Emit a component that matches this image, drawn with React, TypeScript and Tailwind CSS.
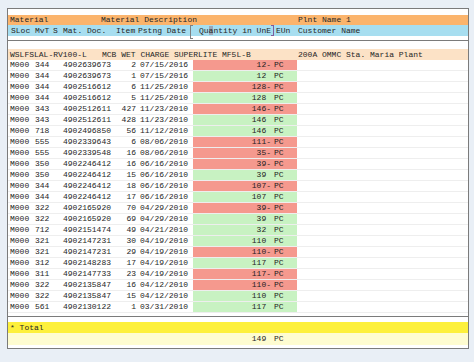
type Line = [string, string, string, string, string, string];

const lines: Line[] = [
    ["M000", "344", "4902639673", "2", "07/15/2016", "12-"],
    ["M000", "344", "4902639673", "1", "07/15/2016", "12"],
    ["M000", "344", "4902516612", "6", "11/25/2010", "128-"],
    ["M000", "344", "4902516612", "5", "11/25/2010", "128"],
    ["M000", "343", "4902512611", "427", "11/23/2010", "146-"],
    ["M000", "343", "4902512611", "428", "11/23/2010", "146"],
    ["M000", "718", "4902496850", "56", "11/12/2010", "146"],
    ["M000", "555", "4902339643", "6", "08/06/2010", "111-"],
    ["M000", "555", "4902339548", "16", "08/06/2010", "35-"],
    ["M000", "350", "4902246412", "16", "06/16/2010", "39-"],
    ["M000", "350", "4902246412", "15", "06/16/2010", "39"],
    ["M000", "344", "4902246412", "18", "06/16/2010", "107-"],
    ["M000", "344", "4902246412", "17", "06/16/2010", "107"],
    ["M000", "322", "4902165920", "70", "04/29/2010", "39-"],
    ["M000", "322", "4902165920", "69", "04/29/2010", "39"],
    ["M000", "712", "4902151474", "49", "04/21/2010", "32"],
    ["M000", "321", "4902147231", "30", "04/19/2010", "110"],
    ["M000", "321", "4902147231", "29", "04/19/2010", "110-"],
    ["M000", "312", "4902148283", "17", "04/19/2010", "117"],
    ["M000", "311", "4902147733", "23", "04/19/2010", "117-"],
    ["M000", "322", "4902135847", "16", "04/12/2010", "110-"],
    ["M000", "322", "4902135847", "15", "04/12/2010", "110"],
    ["M000", "561", "4902130122", "1", "03/31/2010", "117"],
];

function ListRow({ line }: { line: Line }) {
    const [sloc, mvt, doc, item, date, qty] = line;
    const neg = qty.endsWith("-");
    return (
        <div className="flex h-[11px] shrink-0 border-b border-[#eeeeee] leading-[10px] whitespace-pre">
            <span className="w-[27px] shrink-0 pl-[2px]">{sloc}</span>
            <span className="w-[28px] shrink-0">{mvt}</span>
            <span className="w-[52px] shrink-0">{doc}</span>
            <span className="w-[21px] shrink-0 text-right">{item}</span>
            <span className="w-[57px] shrink-0 pl-[4px]">{date}</span>
            <span className={`flex w-[104px] shrink-0 text-[#1e1e1e] ${neg ? "bg-[#f5998e]" : "bg-[#c8f2c2]"}`}>
                <span className="w-[78px] text-right">{neg ? qty : qty + " "}</span>
                <span className="pl-[3px]">PC</span>
            </span>
        </div>
    );
}

export default function App() {
    return (
        <div className="h-[362px] w-[474px] overflow-hidden bg-[#e9eff6] pt-[8px] pl-[7px] font-['Liberation_Mono',monospace] text-[8px] text-[#262626]">
            <div className="flex h-[341px] w-[462px] flex-col border border-[#7b7b7b] bg-white">
                {/* Column headers */}
                <div className="flex flex-col pt-[6px] pb-[4px]">
                    <div className="flex h-[10px] bg-[#fbb46c] leading-[10px] whitespace-pre">
                        <span className="w-[93px] pl-[2px]">Material</span>
                        <span className="w-[197px]">Material Description</span>
                        <span>Plnt Name 1</span>
                    </div>
                    <div className="relative flex h-[11px] bg-[#a7def0] leading-[11px] whitespace-pre">
                        <span className="w-[27px] pl-[3px]">SLoc</span>
                        <span className="w-[18px]">MvT</span>
                        <span className="w-[10px]">S</span>
                        <span className="w-[53px]">Mat. Doc.</span>
                        <span className="w-[22px]">Item</span>
                        <span className="w-[52px]">Pstng Date</span>
                        <span className="w-[81px] text-right">
                            Qu<span className="bg-[#9ba7b7]">a</span>ntity in UnE
                        </span>
                        <span className="w-[5px]" />
                        <span className="w-[22px]">EUn</span>
                        <span>Customer Name</span>
                        {/* column selection markers */}
                        <span className="absolute left-[182px] top-0 h-[14px] w-[3px] border-y border-l border-[#808080]" />
                        <span className="absolute left-[263px] top-0 h-[11px] w-[3px] border-y border-r border-[#7d5d9e]" />
                    </div>
                </div>
                <div className="h-px shrink-0 bg-[#7b7b7b]" />

                {/* List body */}
                <div className="flex flex-col pt-[8px] pb-[3px]">
                    <div className="flex h-[11px] bg-[#fce2c6] leading-[11px] whitespace-pre">
                        <span className="w-[94px] pl-[2px]">WSLFSLAL-RV100-L</span>
                        <span className="w-[196px]">MCB WET CHARGE SUPERLITE MF5L-B</span>
                        <span>200A OMMC Sta. Maria Plant</span>
                    </div>
                    {lines.map((line, i) => (
                        <ListRow key={i} line={line} />
                    ))}
                </div>
                <div className="h-px shrink-0 bg-[#7b7b7b]" />

                {/* Totals */}
                <div className="flex flex-col pt-[5px]">
                    <div className="flex h-[11px] bg-[#fdf03c] pl-[2px] leading-[11px] whitespace-pre">
                        * Total
                    </div>
                    <div className="flex h-[12px] bg-[#fefcd0] leading-[12px] whitespace-pre">
                        <span className="w-[185px]" />
                        <span className="w-[78px] text-right">{"149 "}</span>
                        <span className="pl-[3px]">PC</span>
                    </div>
                </div>
            </div>
        </div>
    );
}
